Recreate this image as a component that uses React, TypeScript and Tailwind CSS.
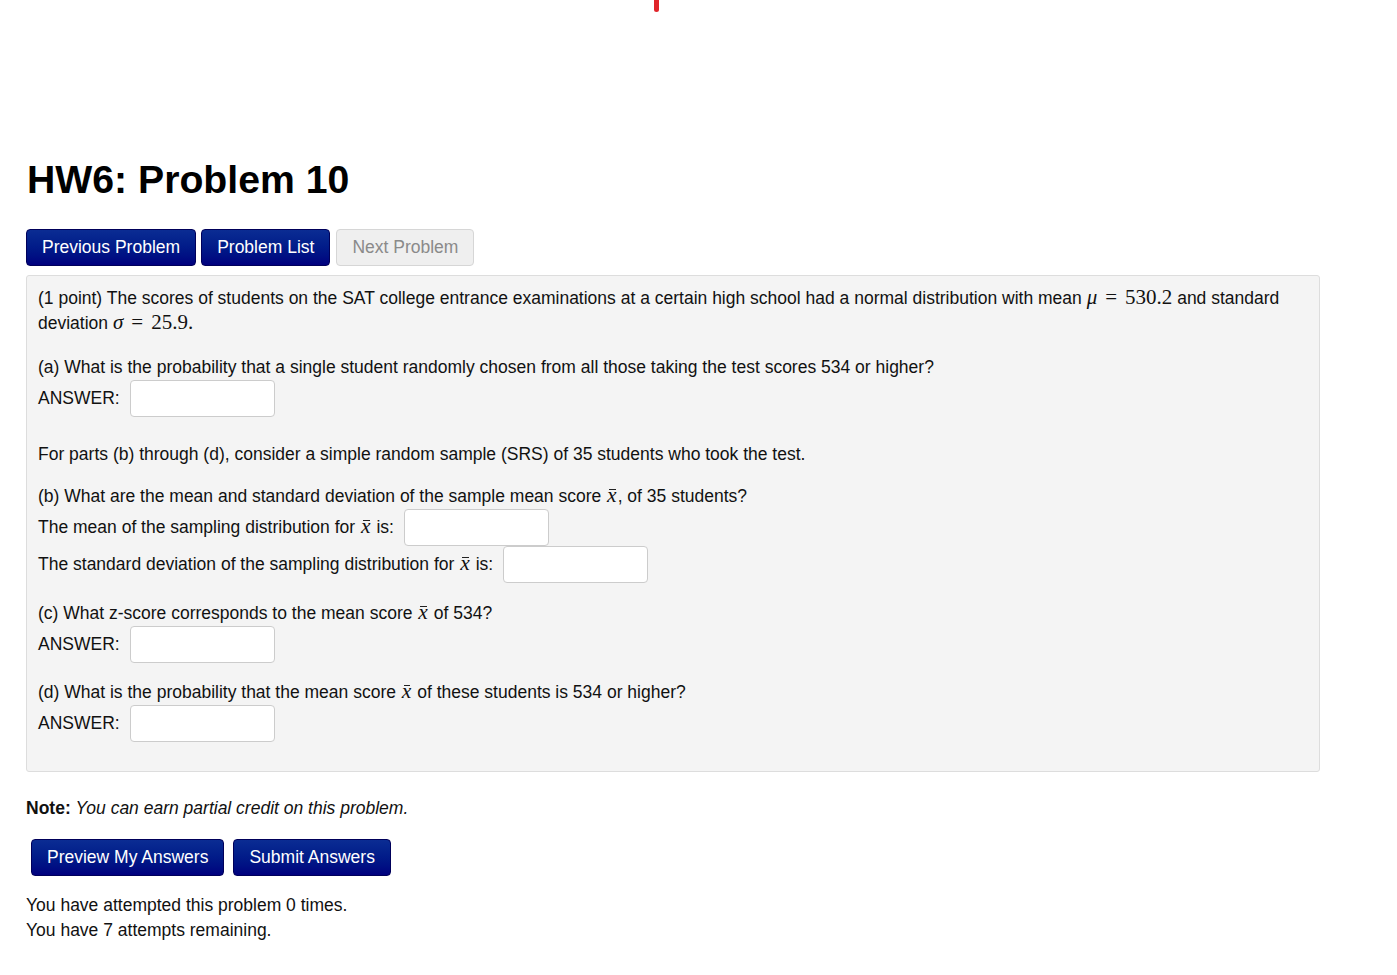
import React from "react";

const navBtn =
  "h-[37px] px-[15px] rounded-[4px] border border-[#00005a] bg-gradient-to-b from-[#0b2c93] to-[#00007e] text-white text-[17.5px] leading-none";

function Xbar() {
  return (
    <span className="relative inline-block mx-[1px] font-['Liberation_Serif',serif] italic text-[21.5px] leading-none">
      x
      <span className="absolute left-[2px] right-[1px] top-[4px] h-[1px] bg-[#222]"></span>
    </span>
  );
}

function Math({ sym, value }: { sym: string; value: string }) {
  return (
    <span className="font-['Liberation_Serif',serif] text-[21px] leading-none">
      <i>{sym}</i>
      <span className="mx-[8px]">=</span>
      {value}
    </span>
  );
}

function AnswerBox() {
  return (
    <input
      type="text"
      className="w-[145px] h-[37px] ml-[10px] bg-white border border-[#cccccc] rounded-[4px]"
    />
  );
}

export default function App() {
  return (
    <div className="relative min-h-[975px] bg-white text-[#111] font-['Liberation_Sans',Arial,sans-serif] text-[17.5px] leading-[25px]">
      <div className="absolute left-[654px] top-0 w-[5px] h-[12px] rounded-b-[3px] bg-[#e0242a]"></div>

      <div className="pl-[26px] pt-[155px]">
        <h1 className="text-[39.2px] font-bold leading-[50px] text-black pl-[1px]">HW6: Problem 10</h1>

        <div className="flex gap-[5px] mt-[24px]">
          <button className={navBtn}>Previous Problem</button>
          <button className={navBtn}>Problem List</button>
          <button className="h-[37px] px-[15px] ml-[1px] rounded-[4px] border border-[#d6d6d6] bg-[#efefef] text-[#8a8a8a] text-[17.5px] leading-none">
            Next Problem
          </button>
        </div>

        <div className="w-[1294px] mt-[9px] bg-[#f4f4f4] border border-[#dddddd] rounded-[3px] pl-[11px] pr-[20px] pt-[10px] pb-[29px]">
          <p>
            (1 point) The scores of students on the SAT college entrance examinations at a certain high school had a
            normal distribution with mean <Math sym="μ" value="530.2" /> and standard deviation{" "}
            <Math sym="σ" value="25.9." />
          </p>

          <p className="mt-[19px]">
            (a) What is the probability that a single student randomly chosen from all those taking the test scores 534
            or higher?
          </p>
          <div className="flex items-center h-[37px]">
            <span>ANSWER:</span>
            <AnswerBox />
          </div>

          <p className="mt-[25px]">
            For parts (b) through (d), consider a simple random sample (SRS) of 35 students who took the test.
          </p>

          <p className="mt-[17px]">
            (b) What are the mean and standard deviation of the sample mean score <Xbar />, of 35 students?
          </p>
          <div className="flex items-center h-[37px]">
            <span>
              The mean of the sampling distribution for <Xbar /> is:
            </span>
            <AnswerBox />
          </div>
          <div className="flex items-center h-[37px]">
            <span>
              The standard deviation of the sampling distribution for <Xbar /> is:
            </span>
            <AnswerBox />
          </div>

          <p className="mt-[18px]">
            (c) What z-score corresponds to the mean score <Xbar /> of 534?
          </p>
          <div className="flex items-center h-[37px]">
            <span>ANSWER:</span>
            <AnswerBox />
          </div>

          <p className="mt-[17px]">
            (d) What is the probability that the mean score <Xbar /> of these students is 534 or higher?
          </p>
          <div className="flex items-center h-[37px]">
            <span>ANSWER:</span>
            <AnswerBox />
          </div>
        </div>

        <p className="mt-[24px]">
          <b>Note:</b> <i>You can earn partial credit on this problem.</i>
        </p>

        <div className="flex gap-[9px] ml-[5px] mt-[18px]">
          <button className={navBtn}>Preview My Answers</button>
          <button className={navBtn}>Submit Answers</button>
        </div>

        <p className="mt-[17px]">You have attempted this problem 0 times.</p>
        <p>You have 7 attempts remaining.</p>
      </div>
    </div>
  );
}
